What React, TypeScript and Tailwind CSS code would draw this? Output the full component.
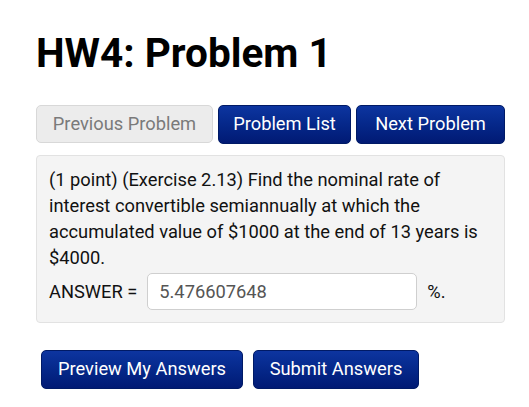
import React from "react";

const blueBtn =
	"h-[39px] rounded-[5px] border border-[#001a66] bg-gradient-to-b from-[#0d35a0] to-[#011a74] text-white text-[18.3px] leading-none";

const App = () => {
	return (
		<div
			className="w-[529px] h-[407px] bg-white text-[#111] overflow-hidden"
			style={{ fontFamily: "Roboto, 'Liberation Sans', sans-serif" }}>
			<div className="pl-[36px] pr-[24px] pt-[31px]">
				{/* Title */}
				<h1 className="text-[40.5px] font-bold leading-[44px] text-black">
					HW4: Problem 1
				</h1>

				{/* Nav buttons */}
				<div className="mt-[30px] flex gap-[5px]">
					<button className="h-[38px] w-[177px] rounded-[5px] border border-[#d8d8d8] bg-[#ececec] text-[#7a7a7a] text-[18.3px] leading-none">
						Previous Problem
					</button>
					<button className={`${blueBtn} w-[133px]`}>Problem List</button>
					<button className={`${blueBtn} w-[149px]`}>Next Problem</button>
				</div>

				{/* Problem panel */}
				<div className="mt-[11px] w-[469px] rounded-[4px] border border-[#e2e2e2] bg-[#f4f4f4] pl-[12px] pr-[10px] pt-[11px] pb-[12px]">
					<p className="text-[18.3px] leading-[26px] text-[#111]">
						(1 point) (Exercise 2.13) Find the nominal rate of interest
						convertible semiannually at which the accumulated value of $1000
						at the end of 13 years is $4000.
					</p>
					<div className="mt-[2px] flex items-center">
						<span className="text-[18.3px] leading-[26px]">ANSWER =</span>
						<div className="ml-[10px] flex h-[37px] w-[270px] items-center rounded-[5px] border border-[#cfcfcf] bg-white px-[11px] text-[18.3px] text-[#555]">
							5.476607648
						</div>
						<span className="ml-[10px] text-[18.3px] leading-[26px]">%.</span>
					</div>
				</div>

				{/* Submit buttons */}
				<div className="mt-[27px] ml-[5px] flex gap-[10px]">
					<button className={`${blueBtn} w-[202px]`}>Preview My Answers</button>
					<button className={`${blueBtn} w-[166px]`}>Submit Answers</button>
				</div>
			</div>
		</div>
	);
};

export default App;
